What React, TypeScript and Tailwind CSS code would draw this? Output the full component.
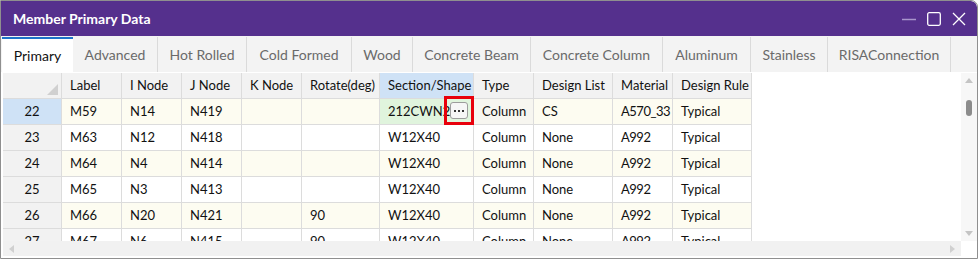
const tabs = [
  { name: "Primary", w: "w-[71px]" },
  { name: "Advanced", w: "w-[85px]" },
  { name: "Hot Rolled", w: "w-[89px]" },
  { name: "Cold Formed", w: "w-[105px]" },
  { name: "Wood", w: "w-[61px]" },
  { name: "Concrete Beam", w: "w-[118px]" },
  { name: "Concrete Column", w: "w-[132px]" },
  { name: "Aluminum", w: "w-[88px]" },
  { name: "Stainless", w: "w-[77px]" },
  { name: "RISAConnection", w: "w-[123px]" },
];

const cols = [
  { name: "Label", w: "w-[60px]" },
  { name: "I Node", w: "w-[60px]" },
  { name: "J Node", w: "w-[60px]" },
  { name: "K Node", w: "w-[60px]" },
  { name: "Rotate(deg)", w: "w-[78px]" },
  { name: "Section/Shape", w: "w-[94px]" },
  { name: "Type", w: "w-[60px]" },
  { name: "Design List", w: "w-[79px]" },
  { name: "Material", w: "w-[60px] tracking-[-0.5px]" },
  { name: "Design Rule", w: "w-[79px]" },
];

const rows = [
  ["22", "M59", "N14", "N419", "", "", "212CWN20", "Column", "CS", "A570_33", "Typical"],
  ["23", "M63", "N12", "N418", "", "", "W12X40", "Column", "None", "A992", "Typical"],
  ["24", "M64", "N4", "N414", "", "", "W12X40", "Column", "None", "A992", "Typical"],
  ["25", "M65", "N3", "N413", "", "", "W12X40", "Column", "None", "A992", "Typical"],
  ["26", "M66", "N20", "N421", "", "90", "W12X40", "Column", "None", "A992", "Typical"],
  ["27", "M67", "N6", "N415", "", "90", "W12X40", "Column", "None", "A992", "Typical"],
];

export default function App() {
  return (
    <div className="w-[978px] h-[259px] bg-white border border-[#8f8f8f] rounded-tr-[7px] overflow-hidden flex flex-col font-['Lato',sans-serif] text-[#111]">
      {/* title bar */}
      <div className="h-[35px] shrink-0 bg-[#55308d] flex items-center justify-between pl-[12px] pr-[11px] rounded-tr-[6px]">
        <span className="text-white text-[14px] font-bold">Member Primary Data</span>
        <div className="flex items-center gap-[11px]">
          <svg width="14" height="14" viewBox="0 0 14 14">
            <line x1="0" y1="7.5" x2="14" y2="7.5" stroke="#a995cc" strokeWidth="1.3" />
          </svg>
          <svg width="14" height="14" viewBox="0 0 14 14">
            <rect x="0.7" y="0.7" width="12.6" height="12.6" rx="1.5" fill="none" stroke="white" strokeWidth="1.3" />
          </svg>
          <svg width="14" height="14" viewBox="0 0 14 14">
            <path d="M1 1 L13 13 M13 1 L1 13" stroke="white" strokeWidth="1.3" />
          </svg>
        </div>
      </div>

      {/* tabs */}
      <div className="h-[37px] shrink-0 bg-[#f3f3f3] flex items-end pl-[1px] border-b border-white">
        {tabs.map((t, i) => (
          <div
            key={t.name}
            className={
              i === 0
                ? `${t.w} h-[35px] bg-white border-t-2 border-[#1d73c9] flex items-center justify-center text-[14px] text-[#111]`
                : `${t.w} h-[35px] border-r border-[#dadada] flex items-center justify-center text-[14px] text-[#6a6a6a]`
            }
          >
            {t.name}
          </div>
        ))}
      </div>

      {/* grid */}
      <div className="flex-1 flex flex-col pl-[2px] min-h-0">
        <div className="flex flex-1 min-h-0">
          <div className="flex-1 overflow-hidden text-[13px] bg-white">
            <div className="flex w-fit h-[26px] border-b border-[#dcdcdc]">
              <div className="w-[59px] bg-[#f2f2f2] border-r border-[#dcdcdc] relative">
                <div className="absolute right-[3px] bottom-[3px] w-0 h-0 border-l-[11px] border-l-transparent border-b-[11px] border-b-[#d0d0d0]" />
              </div>
              {cols.map((c, i) => (
                <div
                  key={c.name}
                  className={`${c.w} border-r border-[#dcdcdc] flex items-center pl-[8px] whitespace-nowrap tracking-normal ${i === 5 ? "bg-[#cfe2f6]" : "bg-[#f2f2f2]"}`}
                >
                  {c.name}
                </div>
              ))}
            </div>
            {rows.map((r, ri) => (
              <div
                key={r[0]}
                className={`flex w-fit h-[26px] border-b border-[#dcdcdc] ${ri % 2 === 0 ? "bg-[#fdfcf1]" : "bg-white"}`}
              >
                <div
                  className={`w-[59px] border-r border-[#dcdcdc] flex items-center justify-center ${ri === 0 ? "bg-[#cfe2f6]" : "bg-[#f2f2f2]"}`}
                >
                  {r[0]}
                </div>
                {cols.map((c, ci) => {
                  const sel = ri === 0 && ci === 5;
                  return (
                    <div
                      key={c.name}
                      className={`${c.w} border-r border-[#dcdcdc] flex items-center pl-[8px] relative overflow-hidden ${sel ? "bg-[#e0f4dd] overflow-visible" : ""} ${ri === 0 && ci === 6 ? "bg-[#f7f6f0]" : ""}`}
                    >
                      <span className={`whitespace-nowrap ${sel ? "overflow-hidden w-[62px]" : ""}`}>{r[ci + 1]}</span>
                      {sel && (
                        <div className="absolute right-[-1px] top-[-3px] w-[30px] h-[29px] border-[3px] border-[#e8000b] flex items-center justify-center">
                          <div className="w-[18px] h-[17px] bg-[#f6f6f6] border border-[#9c9c9c] rounded-[3px] flex items-center justify-center gap-[2px]">
                            <span className="w-[2px] h-[2px] bg-[#333]" />
                            <span className="w-[2px] h-[2px] bg-[#333]" />
                            <span className="w-[2px] h-[2px] bg-[#333]" />
                          </div>
                        </div>
                      )}
                    </div>
                  );
                })}
              </div>
            ))}
          </div>
          {/* vertical scrollbar */}
          <div className="w-[16px] bg-[#f7f7f7] flex flex-col items-center justify-between pt-[5px] pb-[5px]">
            <div className="flex flex-col items-center gap-[17px]">
              <div className="w-0 h-0 border-l-[4px] border-r-[4px] border-b-[5px] border-l-transparent border-r-transparent border-b-[#c4c4c4]" />
              <div className="w-[6px] h-[16px] rounded-full bg-[#8c8c8c]" />
            </div>
            <div className="w-0 h-0 border-l-[4px] border-r-[4px] border-t-[5px] border-l-transparent border-r-transparent border-t-[#c4c4c4]" />
          </div>
        </div>
        {/* horizontal scrollbar */}
        <div className="h-[15px] shrink-0 flex mb-[2px]">
          <div className="flex-1 bg-[#f1f1f1] flex items-center justify-between px-[6px]">
            <div className="w-0 h-0 border-t-[4px] border-b-[4px] border-r-[5px] border-t-transparent border-b-transparent border-r-[#d0d0d0]" />
            <div className="w-0 h-0 border-t-[4px] border-b-[4px] border-l-[5px] border-t-transparent border-b-transparent border-l-[#d0d0d0]" />
          </div>
          <div className="w-[16px] bg-white" />
        </div>
      </div>
    </div>
  );
}
